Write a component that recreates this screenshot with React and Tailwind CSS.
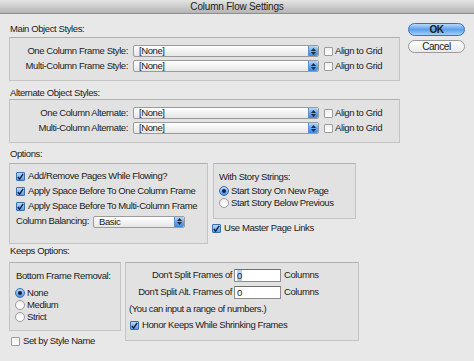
import React from 'react';

const Stepper = () => (
  <div className="w-[10px] h-full rounded-r-[2px] bg-gradient-to-b from-[#b9d7f7] via-[#6aa6ea] to-[#3f86dd] border-l border-[#5b8fcf] flex flex-col items-center justify-center gap-[1px]">
    <svg width="5" height="3" viewBox="0 0 5 3"><path d="M0 3 L2.5 0 L5 3 Z" fill="#1c2c44" /></svg>
    <svg width="5" height="3" viewBox="0 0 5 3"><path d="M0 0 L2.5 3 L5 0 Z" fill="#1c2c44" /></svg>
  </div>
);

const Popup = ({ value, width }) => (
  <div className={`${width} h-[12px] flex items-stretch border border-[#9a9a9a] rounded-[2px] bg-gradient-to-b from-white to-[#e6e6e6] shrink-0`}>
    <div className="flex-1 pl-[5px] leading-[10px]">{value}</div>
    <Stepper />
  </div>
);

const Check = ({ checked }) => (
  <div className={`w-[9px] h-[9px] shrink-0 rounded-[1px] border flex items-center justify-center ${checked ? 'border-[#3b6db0] bg-gradient-to-b from-[#bcd9f8] to-[#5c9be6]' : 'border-[#9c9c9c] bg-gradient-to-b from-[#f0f0f0] to-white'}`}>
    {checked && (
      <svg width="8" height="8" viewBox="0 0 8 8"><path d="M1 4 L3 6.5 L7 0.5" stroke="#10203a" strokeWidth="1.6" fill="none" /></svg>
    )}
  </div>
);

const Radio = ({ on }) => (
  <div className={`w-[10px] h-[10px] shrink-0 rounded-full border flex items-center justify-center ${on ? 'border-[#3b6db0] bg-gradient-to-b from-[#bcd9f8] to-[#4f90e3]' : 'border-[#9c9c9c] bg-gradient-to-b from-[#f0f0f0] to-white'}`}>
    {on && <div className="w-[4px] h-[4px] rounded-full bg-[#13223a]" />}
  </div>
);

const CheckRow = ({ checked, children, className = '' }) => (
  <div className={`flex items-center gap-[3px] h-[13px] whitespace-nowrap ${className}`}>
    <Check checked={checked} />
    <span>{children}</span>
  </div>
);

const RadioRow = ({ on, children }) => (
  <div className="flex items-center gap-[2px] h-[12px] whitespace-nowrap">
    <Radio on={on} />
    <span>{children}</span>
  </div>
);

const Box = ({ className = '', children }) => (
  <div className={`border border-[#c4c4c4] border-t-[#b0b0b0] bg-[#e2e2e2] ${className}`}>{children}</div>
);

const StyleRow = ({ label }) => (
  <div className="flex items-center h-[12px] whitespace-nowrap">
    <div className="w-[123px] text-right pr-[5px] shrink-0">{label}</div>
    <Popup value="[None]" width="w-[186px]" />
    <div className="ml-[5px] flex items-center gap-[2px]">
      <Check />
      <span>Align to Grid</span>
    </div>
  </div>
);

const App = () => {
  return (
    <div className="w-[474px] h-[361px] bg-[#e8e8e8] text-[#1b1b1b] text-[9.5px] font-['Liberation_Sans',sans-serif] tracking-[-0.4px] overflow-hidden">
      <div className="h-[14px] bg-gradient-to-b from-[#e4e4e4] to-[#b5b5b5] border-b border-[#8f8f8f] flex items-center justify-center text-[#222] text-[10px] tracking-[-0.2px]">
        Column Flow Settings
      </div>

      <div className="flex pl-[9px]">
        <div className="w-[391px] shrink-0">
          <div className="mt-[10px] h-[10px] leading-[10px] pl-[1px]">Main Object Styles:</div>
          <Box className="mt-[3px] h-[44px] pt-[7px] flex flex-col gap-[3px]">
            <StyleRow label="One Column Frame Style:" />
            <StyleRow label="Multi-Column Frame Style:" />
          </Box>

          <div className="mt-[7px] h-[10px] leading-[10px] pl-[1px]">Alternate Object Styles:</div>
          <Box className="mt-[1px] h-[44px] pt-[7px] flex flex-col gap-[3px]">
            <StyleRow label="One Column Alternate:" />
            <StyleRow label="Multi-Column Alternate:" />
          </Box>

          <div className="mt-[6px] h-[10px] leading-[10px] pl-[1px]">Options:</div>
          <div className="mt-[4px] flex">
            <Box className="w-[199px] h-[81px] pt-[6px] pl-[6px] flex flex-col gap-[2px] shrink-0">
              <CheckRow checked>Add/Remove Pages While Flowing?</CheckRow>
              <CheckRow checked>Apply Space Before To One Column Frame</CheckRow>
              <CheckRow checked>Apply Space Before To Multi-Column Frame</CheckRow>
              <div className="flex items-center h-[13px] whitespace-nowrap">
                <span className="w-[77px] shrink-0">Column Balancing:</span>
                <Popup value="Basic" width="w-[92px]" />
              </div>
            </Box>
            <div className="ml-[5px]">
              <Box className="w-[143px] h-[56px] pt-[7px] pl-[5px] whitespace-nowrap">
                <div className="h-[12px] leading-[12px]">With Story Strings:</div>
                <div className="mt-[2px] flex flex-col">
                  <RadioRow on>Start Story On New Page</RadioRow>
                  <RadioRow>Start Story Below Previous</RadioRow>
                </div>
              </Box>
              <CheckRow checked className="mt-[3px] -ml-[1px]">Use Master Page Links</CheckRow>
            </div>
          </div>

          <div className="mt-[2px] h-[10px] leading-[10px] pl-[1px]">Keeps Options:</div>
          <div className="mt-[6px] flex items-start">
            <div className="shrink-0">
              <Box className="w-[112px] h-[69px] pt-[7px] pl-[5px] whitespace-nowrap">
                <div className="h-[12px] leading-[12px] pl-[1px]">Bottom Frame Removal:</div>
                <div className="mt-[5px] flex flex-col">
                  <RadioRow on>None</RadioRow>
                  <RadioRow>Medium</RadioRow>
                  <RadioRow>Strict</RadioRow>
                </div>
              </Box>
              <CheckRow className="mt-[4px] pl-[2px]">Set by Style Name</CheckRow>
            </div>
            <Box className="ml-[4px] w-[234px] h-[79px] pt-[6px] pl-[3px] whitespace-nowrap shrink-0">
              <div className="flex items-center h-[13px]">
                <span className="w-[105px] text-right pr-[2px] shrink-0">Don't Split Frames of</span>
                <div className="w-[47px] h-[13px] bg-white border border-[#8d8d8d] border-t-[#6f6f6f] leading-[11px] pl-[2px] shrink-0">
                  <span className="bg-[#b5d3f7]">0</span>
                </div>
                <span className="ml-[3px]">Columns</span>
              </div>
              <div className="mt-[4px] flex items-center h-[13px]">
                <span className="w-[105px] text-right pr-[2px] shrink-0">Don't Split Alt. Frames of</span>
                <div className="w-[47px] h-[13px] bg-white border border-[#8d8d8d] border-t-[#6f6f6f] leading-[11px] pl-[2px] shrink-0">0</div>
                <span className="ml-[3px]">Columns</span>
              </div>
              <div className="mt-[3px] h-[13px] leading-[13px]">(You can input a range of numbers.)</div>
              <CheckRow checked className="mt-[4px] pl-[1px]">Honor Keeps While Shrinking Frames</CheckRow>
            </Box>
          </div>
        </div>

        <div className="ml-[8px] mt-[9px] w-[57px] flex flex-col gap-[4px]">
          <div className="h-[13px] rounded-full border border-[#4170b0] bg-gradient-to-b from-[#b8d9fb] via-[#5c9fea] to-[#a3cff9] flex items-center justify-center font-bold text-[10px]">OK</div>
          <div className="h-[13px] rounded-full border border-[#9a9a9a] bg-gradient-to-b from-white to-[#e9e9e9] flex items-center justify-center text-[10px]">Cancel</div>
        </div>
      </div>
    </div>
  );
};

export default App;
